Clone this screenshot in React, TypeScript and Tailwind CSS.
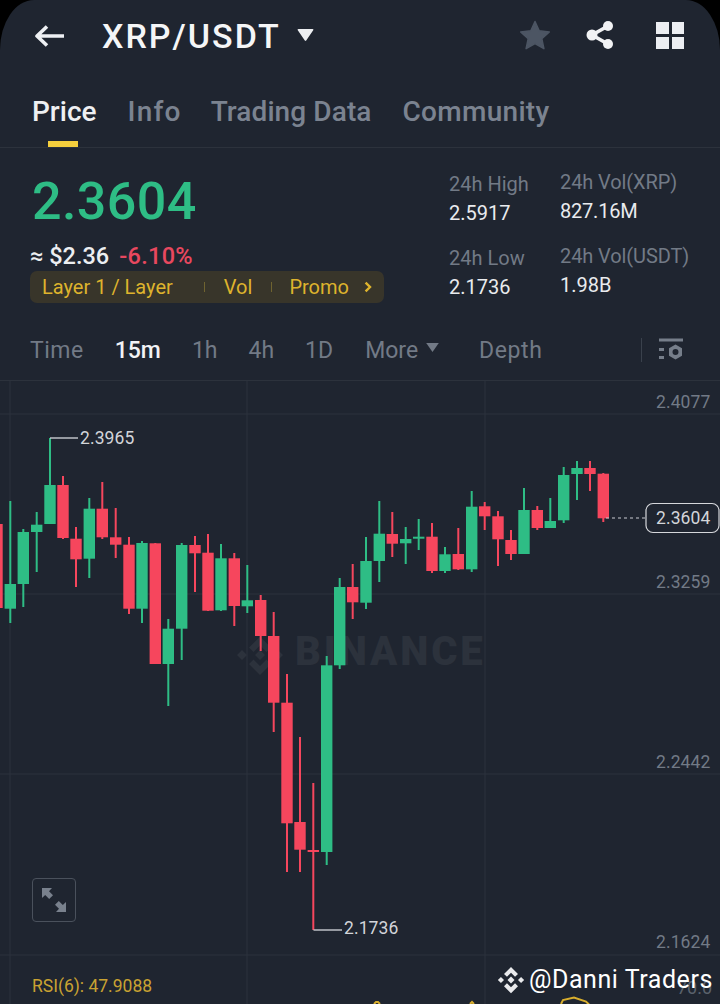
import React from "react";

type C = [number, number, number, number, number, "g" | "r"];
// x, wickTop, wickBottom, bodyTop, bodyBottom, colour
const candles: C[] = [
  [-3, 524, 608, 524, 608, "r"],
  [10.3, 501, 623, 584, 608.7, "g"],
  [23.3, 529, 607, 532, 584, "g"],
  [36.7, 512, 572, 524.7, 532, "g"],
  [50, 438, 524, 485, 524, "g"],
  [63, 476, 539, 485, 538, "r"],
  [76, 527, 587, 538.7, 559.3, "r"],
  [89.3, 498, 578, 508.7, 558.7, "g"],
  [102.3, 482, 539, 508.7, 537.3, "r"],
  [115.7, 508, 558, 537.3, 544.7, "r"],
  [129, 537, 614, 544.7, 608.7, "r"],
  [142, 541, 623, 543, 608.7, "g"],
  [155.3, 543, 664, 543.3, 664, "r"],
  [168.3, 619, 706, 628.7, 664, "g"],
  [181.7, 543, 660, 545, 628.7, "g"],
  [195, 536, 592, 545, 553.3, "r"],
  [208, 534, 611, 552.7, 610.7, "r"],
  [221, 544, 611, 558.3, 610.3, "g"],
  [234.3, 553, 626, 558.3, 606, "r"],
  [247.3, 565, 613, 600.3, 606.3, "g"],
  [260.7, 595, 651, 600, 636, "r"],
  [273.7, 612, 732, 636, 702.7, "r"],
  [287, 674, 872, 702.7, 823.3, "r"],
  [300, 737, 872, 822, 849.7, "r"],
  [313.3, 783, 930, 850, 852, "r"],
  [326.7, 656, 865, 665.3, 852, "g"],
  [339.7, 578, 669, 587, 665.3, "g"],
  [352.7, 564, 619, 587, 602.3, "r"],
  [366, 537, 609, 561, 602.7, "g"],
  [379.3, 501, 582, 533.7, 561, "g"],
  [392.3, 512, 557, 534, 543.7, "r"],
  [405.7, 527, 564, 539, 543.3, "g"],
  [418.7, 519, 550, 536.7, 538.7, "g"],
  [432, 523, 573, 536.7, 571, "r"],
  [445, 547, 573, 554.3, 571, "g"],
  [458.3, 528, 570, 554, 569.3, "r"],
  [471.7, 491, 572, 506.7, 569.3, "g"],
  [484.7, 502, 530, 506.3, 516.3, "r"],
  [498, 511, 566, 516.3, 539.3, "r"],
  [511, 530, 560, 540, 554, "r"],
  [524, 488, 554, 510, 554, "g"],
  [537.3, 506, 530, 510, 528, "r"],
  [550.3, 498, 528, 521, 528, "g"],
  [563.7, 467, 523, 475, 520.3, "g"],
  [577, 461, 500, 468, 474, "g"],
  [590, 461, 491, 468, 474, "r"],
  [603.3, 473, 522, 473.7, 518.3, "r"],
];

const GREEN = "#2ebd85";
const RED = "#f6465d";
const CHART_TOP = 381;
const sans = "font-['Roboto','Noto_Sans',sans-serif]";

function BinanceMark({ className, color }: { className?: string; color: string }) {
  return (
    <svg viewBox="0 0 32 32" className={className} fill={color}>
      <path d="M16 1l8 8-3.400 3.400L16 7.800l-4.600 4.600L8 9z" />
      <path d="M16 31l-8-8 3.400-3.400 4.600 4.600 4.600-4.600L24 23z" />
      <path d="M4.500 12.500L8 16l-3.500 3.500L1 16z" />
      <path d="M27.500 12.500L31 16l-3.500 3.500L24 16z" />
      <path d="M16 12l4 4-4 4-4-4z" />
    </svg>
  );
}

function Chart() {
  const y = (v: number) => v - CHART_TOP;
  return (
    <svg viewBox="0 0 720 623" className="block w-[720px] h-[623px]">
      {[10, 247, 485].map((x) => (
        <line key={x} x1={x} x2={x} y1={0} y2={623} stroke="#2c323c" strokeWidth="1" />
      ))}
      {[414, 594, 774, 955].map((v) => (
        <line key={v} x1={0} x2={720} y1={y(v)} y2={y(v)} stroke="#2c323c" strokeWidth="1" />
      ))}

      {/* watermark */}
      <g fill="#2c323c">
        <path d="M260 636.5l11 11-4.500 4.500-6.500-6.500-6.500 6.500-4.500-4.500z" transform="translate(0 -381)" />
        <path d="M260 675l-11-11 4.500-4.500 6.500 6.500 6.500-6.500 4.500 4.500z" transform="translate(0 -381)" />
        <path d="M242 650l5 5-5 5-5-5zM278 650l5 5-5 5-5-5zM260 650l5 5-5 5-5-5z" transform="translate(0 -381)" />
        <text x="295" y={y(665)} fontFamily="Roboto, sans-serif" fontWeight="900" fontSize="40" letterSpacing="2.900">
          BINANCE
        </text>
      </g>

      {candles.map(([x, wt, wb, bt, bb, c], i) => {
        const col = c === "g" ? GREEN : RED;
        return (
          <g key={i}>
            <rect x={x - 1} y={y(wt)} width={2} height={wb - wt} fill={col} />
            <rect x={x - 5.7} y={y(bt)} width={11.4} height={Math.max(bb - bt, 2)} fill={col} />
          </g>
        );
      })}

      {/* high / low leaders */}
      <path d={`M50 ${y(438)}H78`} stroke="#c9ccd2" strokeWidth="1.400" fill="none" />
      <path d={`M313.500 ${y(930)}H342`} stroke="#c9ccd2" strokeWidth="1.400" fill="none" />
      <path d={`M606 ${y(518)}H645`} stroke="#c9ccd2" strokeWidth="1.200" strokeDasharray="3 3" fill="none" />
      <rect x="646" y={y(503.5)} width="73" height="29" rx="7" fill="#1f2530" stroke="#d5d7db" strokeWidth="1.200" />

      {/* RSI line pieces along the bottom */}
      <path d="M374 623l2-2 2 0 2 2M470 623l2-2 2 2M561 623l2-4 11-2.500 12 4 3 3" stroke="#d8ae2d" strokeWidth="2" fill="none" />
    </svg>
  );
}

function Price({ x, y, children, light }: { x: string; y: string; children: string; light?: boolean }) {
  return (
    <span className={`absolute ${x} ${y} text-[17.5px] leading-[20px] tracking-[0.1px] ${light ? "text-[#d3d5da]" : "text-[#727a86]"}`}>
      {children}
    </span>
  );
}

export default function App() {
  return (
    <div className="bg-black w-[720px] h-[1004px] overflow-hidden">
      <div className={`${sans} relative w-[720px] h-[1004px] overflow-hidden bg-[#1f2530] rounded-tl-[34px_50px] rounded-tr-[34px_50px] text-white`}>
        {/* Header */}
        <div className="flex items-center h-[72px] pl-[35px] pr-[36px]">
          <svg viewBox="0 0 30 24" className="w-[30px] h-[24px]" fill="none" stroke="#eef0f3" strokeWidth="3.600" strokeLinecap="round" strokeLinejoin="round">
            <path d="M29 12H3M12 2.500L2 12l10 9.500" strokeLinecap="butt" />
          </svg>
          <span className="ml-[37px] text-[34px] leading-[40px] font-medium tracking-[2px] text-[#f5f6f7]">XRP/USDT</span>
          <svg viewBox="0 0 20 16" className="ml-[15px] w-[19px] h-[14px] -mt-[2px]" fill="#eceef1">
            <path d="M2 1h16a1 1 0 0 1 .8 1.600l-8 11.600a1 1 0 0 1-1.600 0l-8-11.600A1 1 0 0 1 2 1z" />
          </svg>
          <div className="ml-auto flex items-center">
            <svg viewBox="0 0 32 32" className="w-[32px] h-[32px] -mt-[2px]" fill="#4c5563" stroke="#4c5563" strokeWidth="1.500" strokeLinejoin="round">
              <path d="M16 2.500l4.200 9.300 10.100 1.100-7.500 6.800 2.100 10-8.900-5.100-8.900 5.100 2.100-10-7.500-6.800 10.100-1.100z" />
            </svg>
            <svg viewBox="0 0 32 32" className="ml-[33px] w-[32px] h-[32px] -mt-[2px]" fill="#f1f2f4" stroke="#f1f2f4">
              <path d="M24 7L8 16l16 9" fill="none" strokeWidth="3.600" />
              <circle cx="24" cy="7" r="5" strokeWidth="0" />
              <circle cx="24" cy="25" r="5" strokeWidth="0" />
              <circle cx="8" cy="16" r="5.500" strokeWidth="0" />
            </svg>
            <div className="ml-[40px] grid grid-cols-2 gap-[3px] w-[28px] -mt-[2px]">
              <span className="block h-[12px] bg-[#eceef2]" />
              <span className="block h-[12px] bg-[#eceef2]" />
              <span className="block h-[12px] bg-[#eceef2]" />
              <span className="block h-[12px] bg-[#eceef2]" />
            </div>
          </div>
        </div>

        {/* Tabs */}
        <div className="relative flex items-start h-[76px] pl-[32px] border-b border-[#2c323c] text-[28px] leading-[34px] text-[#7b8390] font-medium pt-[23px]">
          <span className="text-[#eef0f2]">Price</span>
          <span className="ml-[31px] tracking-[1.2px]">Info</span>
          <span className="ml-[29px] tracking-[0.1px]">Trading Data</span>
          <span className="ml-[31px] tracking-[0.3px]">Community</span>
          <span className="absolute left-[48px] bottom-[0px] w-[30px] h-[6px] bg-[#f5cf3d]" />
        </div>

        {/* Stats */}
        <div className="flex h-[157px] pl-[32px]">
          <div className="w-[417px] flex flex-col items-start">
            <div className="mt-[21px] text-[52px] leading-[66px] font-medium tracking-[0.4px] text-[#2ebd85]">2.3604</div>
            <div className="mt-[7px] flex items-baseline text-[23.5px] leading-[28px]">
              <span className="-ml-[2px] text-[#eceef1] font-medium">≈ $2.36</span>
              <span className="ml-[10px] text-[#e8485f] font-medium tracking-[0.3px]">-6.10%</span>
            </div>
            <div className="-ml-[2px] mt-[1px] flex items-center h-[32px] w-[354px] rounded-[7px] bg-[#38352a] pl-[12px] text-[20px] leading-[24px] text-[#deb32d]">
              <span>Layer 1 / Layer</span>
              <span className="ml-[31px] h-[10px] w-px bg-[#6f6330]" />
              <span className="ml-[19px]">Vol</span>
              <span className="ml-[19px] h-[10px] w-px bg-[#6f6330]" />
              <span className="ml-[17px]">Promo</span>
              <svg viewBox="0 0 10 14" className="ml-[15px] w-[8px] h-[12px]" fill="none" stroke="#deb32d" strokeWidth="3">
                <path d="M2 1.500L7.500 7 2 12.500" />
              </svg>
            </div>
          </div>
          <div className="w-[111px] pt-[24px]">
            <div className="text-[20px] leading-[24px] text-[#727a86]">24h High</div>
            <div className="mt-[5px] text-[20px] leading-[24px] text-[#e9ebee]">2.5917</div>
            <div className="mt-[21px] text-[20px] leading-[24px] text-[#727a86]">24h Low</div>
            <div className="mt-[5px] text-[20px] leading-[24px] text-[#e9ebee]">2.1736</div>
          </div>
          <div className="pt-[22px]">
            <div className="text-[20px] leading-[24px] tracking-[-0.1px] text-[#727a86]">24h Vol(XRP)</div>
            <div className="mt-[5px] text-[20px] leading-[24px] tracking-[-0.2px] text-[#e9ebee]">827.16M</div>
            <div className="mt-[21px] text-[20px] leading-[24px] tracking-[-0.1px] text-[#727a86]">24h Vol(USDT)</div>
            <div className="mt-[5px] text-[20px] leading-[24px] text-[#e9ebee]">1.98B</div>
          </div>
        </div>

        {/* Interval bar */}
        <div className="flex items-center h-[76px] pt-[16px] pl-[30px] pr-[36px] border-b border-[#2c323c] text-[23px] leading-[30px] text-[#727a86]">
          <span className="tracking-[0.5px]">Time</span>
          <span className="ml-[31px] font-medium text-[#f2f3f5]">15m</span>
          <span className="ml-[31px]">1h</span>
          <span className="ml-[31px]">4h</span>
          <span className="ml-[31px]">1D</span>
          <span className="ml-[32px]">More</span>
          <svg viewBox="0 0 14 10" className="ml-[8px] -mt-[6px] w-[13px] h-[9px]" fill="#727a86">
            <path d="M0 0h14L7 10z" />
          </svg>
          <span className="ml-[40px] tracking-[0.6px]">Depth</span>
          <span className="ml-auto -mt-[2px] h-[24px] w-px bg-[#3a414c]" />
          <svg viewBox="0 0 26 24" className="ml-[16px] -mt-[2px] w-[26px] h-[24px]" fill="#767e8a">
            <rect x="1" y="0.500" width="24" height="3" />
            <rect x="1" y="10" width="5" height="3" />
            <rect x="1" y="18" width="5" height="3" />
            <path fillRule="evenodd" d="M17.500 6.500l6.500 3.700v7.600l-6.500 3.700-6.500-3.700v-7.600zM17.500 11a3 3 0 1 0 0 6 3 3 0 0 0 0-6z" />
          </svg>
        </div>

        {/* Chart canvas */}
        <div className="relative">
          <Chart />
          <Price x="left-[80px]" y="top-[47px]" light>2.3965</Price>
          <Price x="left-[344px]" y="top-[537px]" light>2.1736</Price>
          <Price x="left-[656px]" y="top-[11px]">2.4077</Price>
          <Price x="left-[656px]" y="top-[191px]">2.3259</Price>
          <Price x="left-[656px]" y="top-[371px]">2.2442</Price>
          <Price x="left-[656px]" y="top-[551px]">2.1624</Price>
          <Price x="left-[656px]" y="top-[127px]" light>2.3604</Price>
          <div className="absolute left-[32px] top-[497px] flex items-center justify-center w-[44px] h-[44px] rounded-[4px] border border-[#4a515c]">
            <svg viewBox="0 0 26 26" className="w-[26px] h-[26px]" fill="#79818d">
              <path d="M1 1h10L8 4.200l4 4-3.800 3.800-4-4L1 11z" />
              <path d="M25 25H15l3-3.200-4-4 3.800-3.800 4 4L25 15z" />
            </svg>
          </div>
          <span className="absolute left-[32px] top-[594px] text-[17.5px] leading-[22px] text-[#c9a232]">RSI(6): 47.9088</span>
          <span className="absolute left-[677px] top-[597px] text-[18px] leading-[20px] text-[#5a616c]">70.0</span>
        </div>

        {/* Watermark */}
        <div className="absolute left-[497px] top-[965px] flex items-center">
          <BinanceMark className="w-[28px] h-[28px]" color="#e9eaec" />
          <span className="ml-[4px] text-[25px] leading-[30px] tracking-[0.55px] text-white">@Danni Traders</span>
        </div>
      </div>
    </div>
  );
}
